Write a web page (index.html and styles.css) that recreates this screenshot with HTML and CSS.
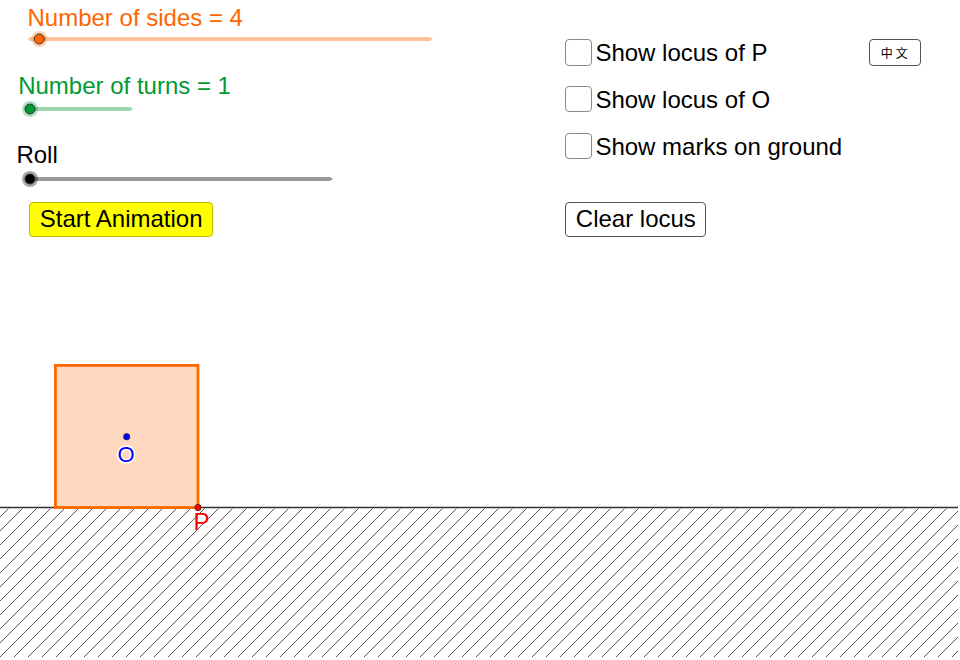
FILE: index.html
```html
<!DOCTYPE html>
<html>
<head>
<meta charset="utf-8">
<title>Rolling polygon</title>
<link rel="stylesheet" href="styles.css">
</head>
<body>
<div class="app">
  <div class="top">
    <div class="left">
      <div class="slider-label sides-label">Number of sides = 4</div>
      <svg class="track sides-track" width="420" height="18" viewBox="0 0 420 18">
        <polygon points="7.3,9 10.3,7 410,7 413,9 410,11 10.3,11" fill="#FFC299"/>
        <circle cx="19.3" cy="9" r="8" fill="#FF6600" fill-opacity="0.3"/>
        <circle cx="19.3" cy="9" r="5" fill="#FF6600" stroke="#333" stroke-width="1"/>
      </svg>

      <div class="slider-label turns-label">Number of turns = 1</div>
      <svg class="track turns-track" width="125" height="18" viewBox="0 0 125 18">
        <polygon points="14,7 116,7 119,9 116,11 14,11" fill="#99D6AD"/>
        <circle cx="16" cy="9" r="8" fill="#009933" fill-opacity="0.3"/>
        <circle cx="16" cy="9" r="5" fill="#009933" stroke="#333" stroke-width="1"/>
      </svg>

      <div class="slider-label roll-label">Roll</div>
      <svg class="track roll-track" width="325" height="18" viewBox="0 0 325 18">
        <polygon points="14,7 316,7 319,9 316,11 14,11" fill="#999999"/>
        <circle cx="16" cy="9" r="8" fill="#000000" fill-opacity="0.35"/>
        <circle cx="16" cy="9" r="5" fill="#000000" stroke="#333" stroke-width="1"/>
      </svg>

      <button class="btn btn-start">Start Animation</button>
    </div>

    <div class="right">
      <div class="check-row">
        <span class="box"></span>
        <span class="check-label">Show locus of P</span>
        <button class="lang">中文</button>
      </div>
      <div class="check-row">
        <span class="box"></span>
        <span class="check-label">Show locus of O</span>
      </div>
      <div class="check-row">
        <span class="box"></span>
        <span class="check-label">Show marks on ground</span>
      </div>
      <button class="btn btn-clear">Clear locus</button>
    </div>
  </div>

  <svg class="drawing" width="958" height="408" viewBox="0 0 958 408">
    <defs>
      <pattern id="hatch" patternUnits="userSpaceOnUse" width="14" height="14">
        <path d="M-1,2 L2,-1 M-1,16 L16,-1" stroke="#555" stroke-width="1" shape-rendering="crispEdges"/>
      </pattern>
    </defs>
    <rect x="0" y="258.5" width="958" height="148.5" fill="url(#hatch)"/>
    <line x1="0" y1="257.5" x2="958" y2="257.5" stroke="#333" stroke-width="1.6"/>
    <rect x="55.4" y="115.4" width="142.6" height="142.1" fill="#FFD9BF" stroke="#FF6600" stroke-width="2.8"/>
    <circle cx="126.7" cy="186.7" r="3.2" fill="#0000FF" stroke="#333" stroke-width="0.8"/>
    <text class="pt-label label-o" x="117.5" y="212">O</text>
    <circle cx="198" cy="257.5" r="3.2" fill="#FF0000" stroke="#333" stroke-width="0.8"/>
    <text class="pt-label label-p" x="193.5" y="280">P</text>
  </svg>
</div>
</body>
</html>
```
FILE: styles.css
```css
* {
  box-sizing: border-box;
}

html, body {
  margin: 0;
  padding: 0;
  background: #ffffff;
}

body {
  font-family: "Liberation Sans", Arial, sans-serif;
  color: #000;
}

.app {
  width: 958px;
  height: 658px;
  overflow: hidden;
  display: flex;
  flex-direction: column;
}

.top {
  display: flex;
  height: 250px;
  flex: none;
}

.left {
  width: 565.3px;
  padding-top: 6.4px;
  display: flex;
  flex-direction: column;
  align-items: flex-start;
}

.slider-label {
  font-size: 24px;
  line-height: 24px;
  white-space: nowrap;
}

.sides-label {
  color: #FF6600;
  margin-left: 27.5px;
}

.turns-label {
  color: #009933;
  margin-left: 18.2px;
  margin-top: 25.4px;
}

.roll-label {
  color: #000;
  margin-left: 16.4px;
  margin-top: 24.7px;
}

.track {
  display: block;
  flex: none;
}

.sides-track {
  margin-left: 20px;
  margin-top: 0;
}

.turns-track {
  margin-left: 14px;
  margin-top: 2.6px;
}

.roll-track {
  margin-left: 14px;
  margin-top: 3.3px;
}

.btn {
  font-family: "Liberation Sans", Arial, sans-serif;
  font-size: 24px;
  line-height: 31px;
  height: 35px;
  padding: 0 9.5px 2px;
  border-radius: 4px;
  color: #000;
  white-space: nowrap;
  margin: 0;
}

.btn-start {
  margin-left: 29.3px;
  margin-top: 14px;
  background: #FFFF00;
  border: 1px solid #B8B800;
}

.btn-clear {
  margin-top: 43.6px;
  background: #ffffff;
  border: 1px solid #555;
}

.right {
  width: 356px;
  padding-top: 39.3px;
  display: flex;
  flex-direction: column;
  align-items: flex-start;
}

.check-row {
  display: flex;
  align-items: flex-start;
  width: 355.4px;
  height: 26px;
  margin-bottom: 20.7px;
}

.check-row:last-of-type {
  margin-bottom: 0;
}

.box {
  width: 26.5px;
  height: 26.5px;
  border: 1px solid #8a8a8a;
  border-radius: 4px;
  background: #fff;
  flex: none;
}

.check-label {
  font-size: 24px;
  line-height: 26px;
  margin-top: 1px;
  margin-left: 3.6px;
  white-space: nowrap;
}

.lang {
  margin-left: auto;
  width: 52px;
  height: 27px;
  padding: 0 0 0 2px;
  border: 1px solid #555;
  border-radius: 4px;
  background: #fff;
  font-family: "Noto Sans CJK TC", "Noto Sans CJK SC", serif;
  font-size: 12px;
  font-weight: 400;
  letter-spacing: 3px;
  line-height: 25px;
  color: #000;
}

.drawing {
  display: block;
  flex: none;
}

.pt-label {
  font-family: "Liberation Sans", Arial, sans-serif;
  font-size: 22px;
  paint-order: stroke;
  stroke: #fff;
  stroke-width: 3px;
  stroke-linejoin: round;
}

.label-o {
  fill: #0000FF;
}

.label-p {
  font-size: 24px;
  fill: #FF0000;
  stroke: none;
}
```
